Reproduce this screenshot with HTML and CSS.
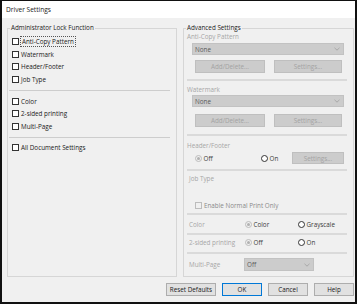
FILE: index.html
```html
<!DOCTYPE html>
<html>
<head>
<meta charset="utf-8">
<link rel="stylesheet" href="styles.css">
</head>
<body>
<div class="window">
  <div class="titlebar">Driver Settings</div>
  <div class="body">
    <div class="groups">
      <fieldset class="group left">
        <legend>Administrator Lock Function</legend>
        <div class="lock-list first">
          <div class="chk-row"><span class="box"></span><span class="focus">Anti-Copy Pattern</span></div>
          <div class="chk-row"><span class="box"></span><span>Watermark</span></div>
          <div class="chk-row"><span class="box"></span><span>Header/Footer</span></div>
          <div class="chk-row"><span class="box"></span><span>Job Type</span></div>
        </div>
        <div class="lsep"></div>
        <div class="lock-list second">
          <div class="chk-row"><span class="box"></span><span>Color</span></div>
          <div class="chk-row"><span class="box"></span><span>2-sided printing</span></div>
          <div class="chk-row"><span class="box"></span><span>Multi-Page</span></div>
        </div>
        <div class="lsep"></div>
        <div class="lock-list third">
          <div class="chk-row"><span class="box"></span><span>All Document Settings</span></div>
        </div>
      </fieldset>
      <fieldset class="group right">
        <legend>Advanced Settings</legend>
        <div class="glabel l-anti">Anti-Copy Pattern</div>
        <div class="combo c-anti"><span>None</span><svg class="chev" width="6" height="4" viewBox="0 0 6 4"><path d="M0.5 0.8 L3 3.2 L5.5 0.8" fill="none" stroke="#9a9a9a" stroke-width="0.7"/></svg></div>
        <div class="btnrow b-anti"><div class="dbtn wide1">Add/Delete...</div><div class="dbtn wide2">Settings...</div></div>
        <div class="rsep s1"></div>
        <div class="glabel l-wm">Watermark</div>
        <div class="combo c-wm"><span>None</span><svg class="chev" width="6" height="4" viewBox="0 0 6 4"><path d="M0.5 0.8 L3 3.2 L5.5 0.8" fill="none" stroke="#9a9a9a" stroke-width="0.7"/></svg></div>
        <div class="btnrow b-wm"><div class="dbtn wide1">Add/Delete...</div><div class="dbtn wide2">Settings...</div></div>
        <div class="rsep s2"></div>
        <div class="glabel l-hf">Header/Footer</div>
        <div class="hf-row">
          <div class="radio-item hf-off"><span class="radio on"></span><span>Off</span></div>
          <div class="radio-item hf-on"><span class="radio"></span><span>On</span></div>
          <div class="dbtn hf-set">Settings...</div>
        </div>
        <div class="rsep s3"></div>
        <div class="glabel l-job">Job Type</div>
        <div class="enable-row"><span class="box light"></span><span>Enable Normal Print Only</span></div>
        <div class="rsep s4"></div>
        <div class="opt-row r-color">
          <span class="olabel">Color</span>
          <div class="radio-item col1"><span class="radio on"></span><span>Color</span></div>
          <div class="radio-item"><span class="radio"></span><span>Grayscale</span></div>
        </div>
        <div class="rsep s5"></div>
        <div class="opt-row r-duplex">
          <span class="olabel">2-sided printing</span>
          <div class="radio-item col1"><span class="radio on"></span><span>Off</span></div>
          <div class="radio-item"><span class="radio"></span><span>On</span></div>
        </div>
        <div class="rsep s6"></div>
        <div class="opt-row r-multi">
          <span class="olabel">Multi-Page</span>
          <div class="combo c-multi"><span>Off</span><svg class="chev" width="6" height="4" viewBox="0 0 6 4"><path d="M0.5 0.8 L3 3.2 L5.5 0.8" fill="none" stroke="#9a9a9a" stroke-width="0.7"/></svg></div>
        </div>
      </fieldset>
    </div>
    <div class="footer">
      <div class="btn reset">Reset Defaults</div>
      <div class="btn ok">OK</div>
      <div class="btn cancel">Cancel</div>
      <div class="btn help">Help</div>
    </div>
  </div>
</div>
</body>
</html>
```
FILE: styles.css
```css
html, body {
  margin: 0;
  padding: 0;
  background: #ffffff;
}
body {
  font-family: "Open Sans", "Noto Sans", sans-serif;
  font-size: 6.3px;
  color: #000;
}
.window {
  box-sizing: border-box;
  width: 357px;
  height: 304px;
  border-top: 1px solid #111;
  border-left: 2px solid #111;
  border-right: 2px solid #111;
  border-bottom: 2px solid #111;
  display: flex;
  flex-direction: column;
  background: #f0f0f0;
}
.titlebar {
  height: 17px;
  background: #fff;
  line-height: 17px;
  padding-left: 4px;
  font-size: 6.6px;
  color: #1a1a1a;
}
.body {
  flex: 1;
  display: flex;
  flex-direction: column;
}
.groups {
  display: flex;
  margin-top: 6px;
  padding-left: 5px;
  gap: 6px;
}
.group {
  margin: 0;
  padding: 0;
  min-width: 0;
  border: 1px solid #d6d6d6;
  box-sizing: border-box;
  height: 253px;
  display: flex;
  flex-direction: column;
}
.group.left { width: 170px; }
.group.right { width: 171px; }
legend {
  margin-left: 2px;
  padding: 0 1px;
  line-height: 8px;
  height: 8px;
  font-size: 6.3px;
  color: #1a1a1a;
}
.lock-list { display: flex; flex-direction: column; padding-left: 4px; }
.lock-list.first { margin-top: 3px; }
.lock-list.second { margin-top: 4px; }
.lock-list.third { margin-top: 3px; }
.chk-row {
  height: 12.7px;
  display: flex;
  align-items: center;
  gap: 2px;
  color: #1a1a1a;
}
.box {
  box-sizing: border-box;
  width: 7px;
  height: 7px;
  border: 1px solid #333;
  background: #fff;
  flex: none;
}
.box.light { border-color: #bcbcbc; background: #f0f0f0; }
.focus { outline: 1px dotted #555; outline-offset: 0; padding: 0 1px; }
.lsep {
  height: 1px;
  background: #cdcdcd;
  margin: 4px 6px 0 1px;
}
.glabel {
  line-height: 8px;
  height: 8px;
  padding-left: 3px;
  color: #a6a6a6;
}
.l-anti { margin-top: 1px; }
.l-wm { margin-top: 5px; }
.l-hf { margin-top: 5.5px; }
.l-job { margin-top: 4px; padding-left: 5px; }
.combo {
  box-sizing: border-box;
  height: 12px;
  margin: 2px 9px 0 8px;
  background: #cccccc;
  border: 1px solid #c2c2c2;
  display: flex;
  align-items: center;
  justify-content: space-between;
  padding: 0 3px 0 2px;
  color: #5a5a5a;
}
.c-wm { margin-top: 1px; }
.btnrow {
  display: flex;
  height: 13px;
  margin-left: 11px;
  gap: 9px;
}
.b-anti { margin-top: 5px; }
.b-wm { margin-top: 7px; }
.dbtn {
  box-sizing: border-box;
  height: 100%;
  background: #cccccc;
  border: 1px solid #bfbfbf;
  color: #a3a3a3;
  display: flex;
  align-items: center;
  justify-content: center;
}
.wide1 { width: 70px; }
.wide2 { width: 68px; }
.rsep {
  height: 2px;
  background: #dadada;
  margin: 0 6px 0 3px;
}
.s1 { margin-top: 6px; }
.s2 { margin-top: 7px; }
.s3 { margin-top: 5px; }
.s4 { margin-top: 3px; }
.s5 { margin-top: 2.5px; }
.s6 { margin-top: 3.5px; }
.hf-row {
  display: flex;
  align-items: center;
  height: 12px;
  margin-top: 2.5px;
  padding-left: 11px;
}
.radio-item {
  display: flex;
  align-items: center;
  gap: 1.5px;
  color: #3a3a3a;
}
.hf-off { width: 66px; }
.hf-on { width: 31px; }
.hf-set { width: 52px; height: 12px; }
.radio {
  box-sizing: border-box;
  width: 7px;
  height: 7px;
  border-radius: 50%;
  border: 1px solid #333;
  background: #fff;
  flex: none;
  display: flex;
  align-items: center;
  justify-content: center;
}
.radio.on { border-color: #bcbcbc; background: #f0f0f0; }
.radio.on::after {
  content: "";
  width: 3px;
  height: 3px;
  border-radius: 50%;
  background: #b0b0b0;
}
.hf-row .radio-item span + span { position: relative; top: 0.5px; }
.enable-row {
  display: flex;
  align-items: center;
  height: 10px;
  margin-top: 17px;
  padding-left: 11px;
  gap: 2px;
  color: #8a8a8a;
}
.opt-row {
  display: flex;
  align-items: center;
  height: 12px;
  padding-left: 5px;
}
.r-color { margin-top: 3.5px; }
.r-duplex { margin-top: 1.5px; }
.r-multi { margin-top: 4px; height: 13px; }
.olabel {
  width: 55px;
  color: #a6a6a6;
}
.col1 { width: 53px; margin-left: 1px; }
.combo.c-multi {
  width: 70px;
  height: 13px;
  margin: 0;
}
.footer {
  display: flex;
  justify-content: flex-end;
  gap: 6px;
  margin-top: 6px;
  padding-right: 1px;
}
.btn {
  box-sizing: border-box;
  height: 13px;
  background: #e1e1e1;
  border: 1px solid #adadad;
  display: flex;
  align-items: center;
  justify-content: center;
  color: #1a1a1a;
}
.reset { width: 50px; }
.ok { width: 40px; border-color: #0078d7; }
.cancel { width: 40px; }
.help { width: 40px; }
```
